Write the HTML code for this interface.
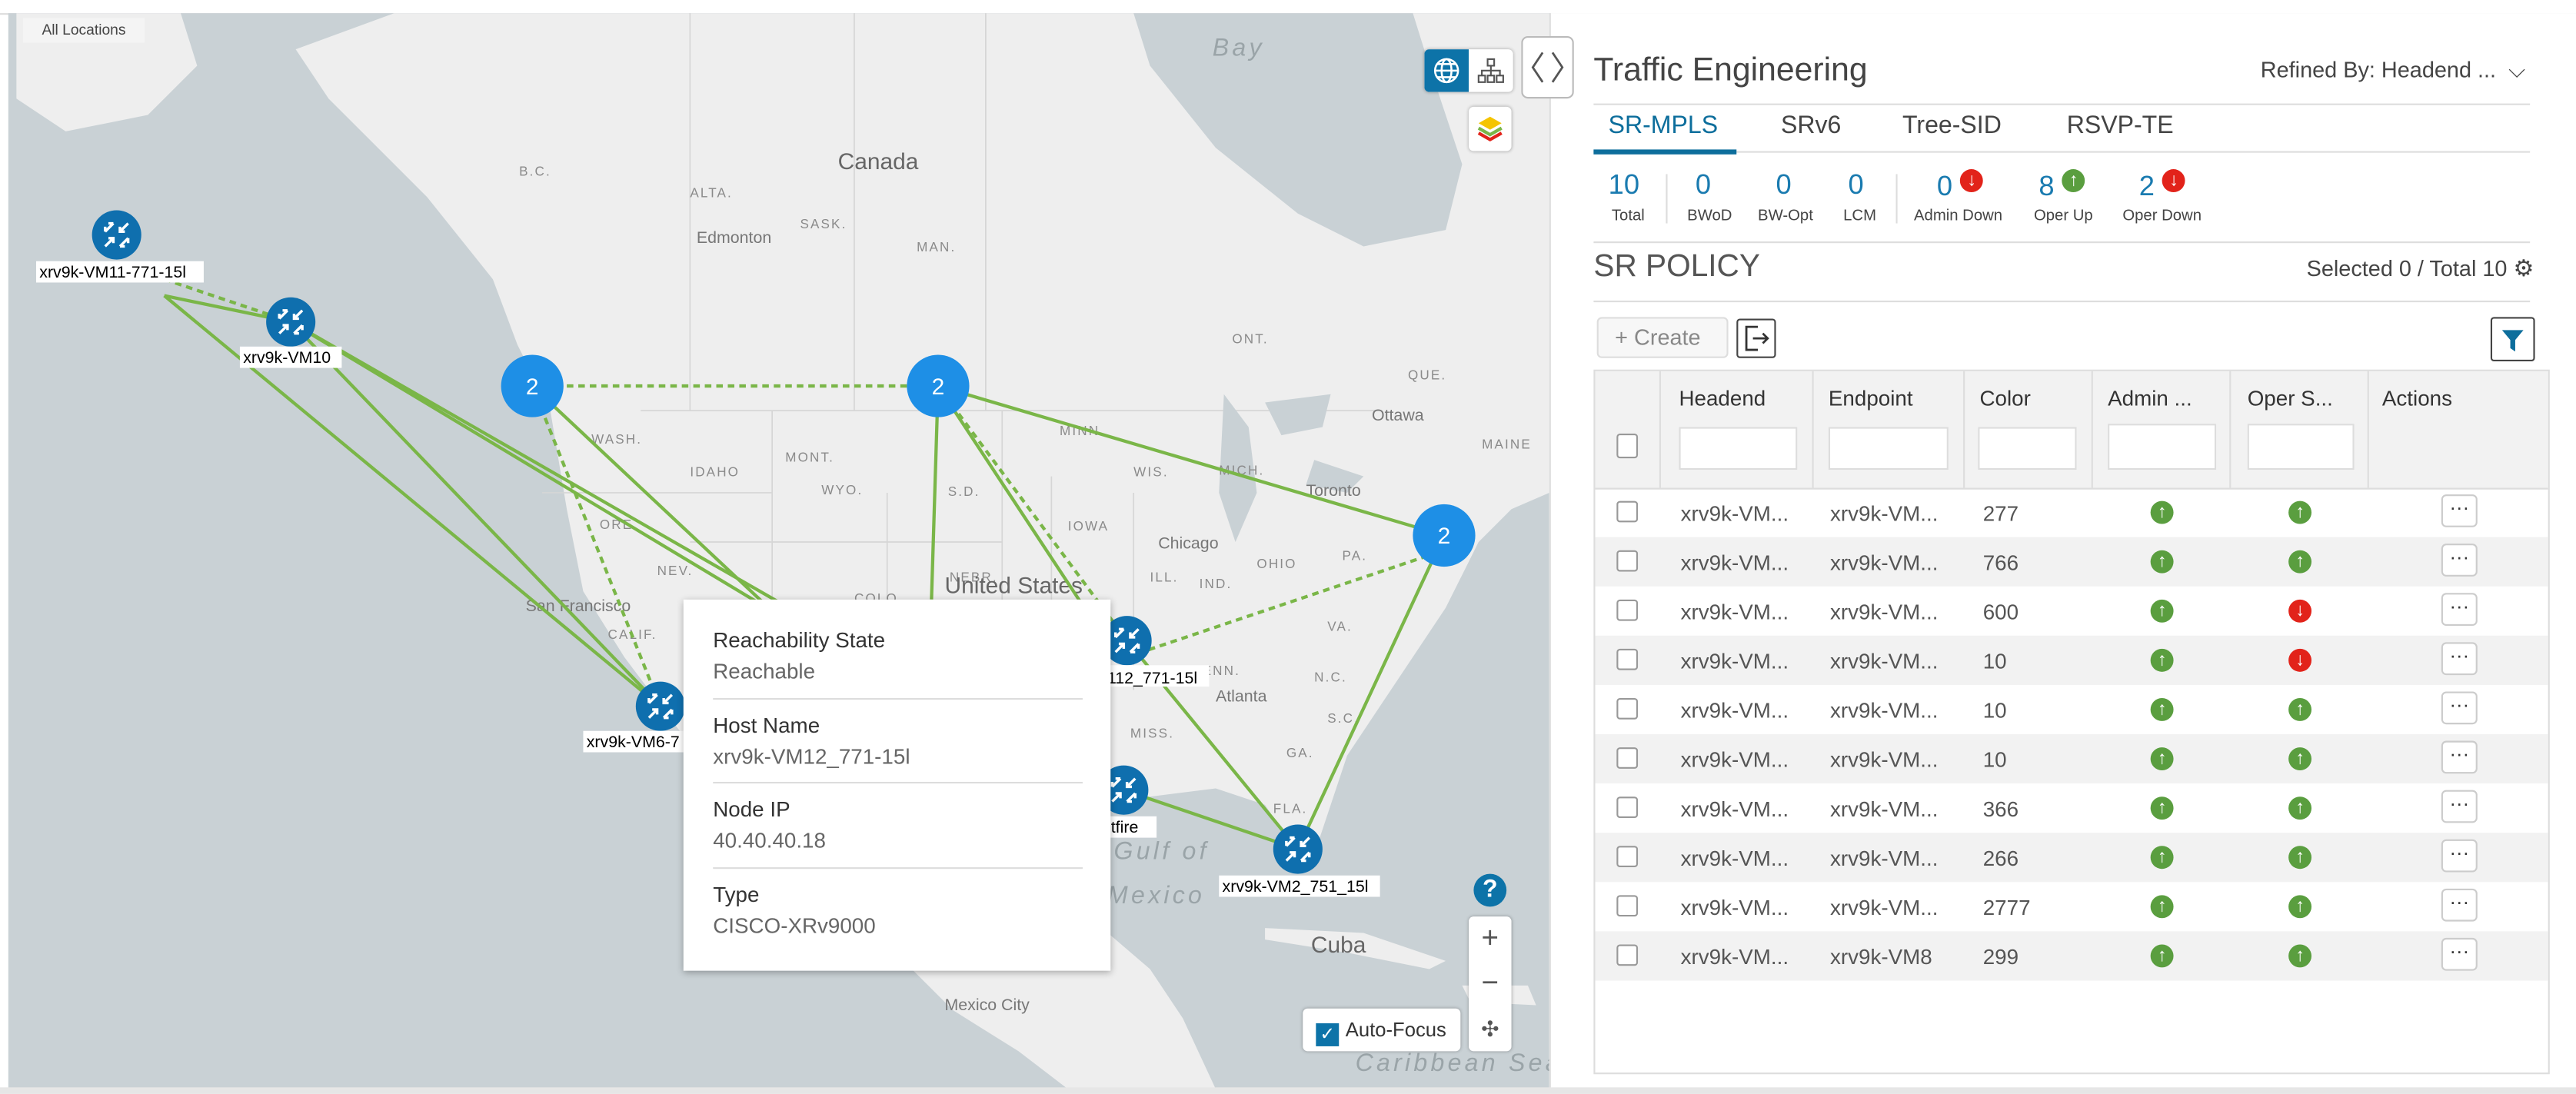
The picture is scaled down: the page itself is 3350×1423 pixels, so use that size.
<!DOCTYPE html>
<html><head><meta charset="utf-8"><style>
html,body{margin:0;padding:0;width:3350px;height:1422px;overflow:hidden;background:#e8e8e8}
#w{position:absolute;left:0;top:0;width:1568px;height:666px;transform:scale(2.13648);transform-origin:0 0;font-family:"Liberation Sans",sans-serif;background:#fff}
.a{position:absolute}
.cb{width:13px;height:13px;border:1px solid #999;border-radius:2px;background:#fff;box-sizing:border-box}
.up,.dn{display:inline-block;width:14px;height:14px;border-radius:50%;position:relative;vertical-align:middle}
.up{background:#5a9e3f}.dn{background:#e2231a}
.up:after,.dn:after{position:absolute;left:0;right:0;top:0;line-height:14px;text-align:center;color:#fff;font-size:11px;font-weight:bold}
.up:after{content:"↑"}.dn:after{content:"↓"}
.dots{width:22px;height:20px;border:1px solid #ccc;border-radius:3px;background:#fff;text-align:center;line-height:14px;font-size:12px;color:#333;box-sizing:border-box}
.row{position:absolute;left:971px;width:580px;height:30px;font-size:13px;color:#555}
.row span{position:absolute;top:8px}
</style></head><body><div id="w">
<div class="a" style="left:0;top:0;width:1568px;height:8px;background:#fff;border-bottom:1px solid #ddd"></div>
<svg class="a" style="left:5px;top:8px" width="938" height="655" viewBox="5 8 938 655">
<rect x="5" y="8" width="938" height="655" fill="#c9d1d5"/>
<path fill="#eeeeee" d="M240,8 L690,8 L700,40 L740,90 L790,130 L830,150 L880,140 L890,100 L870,40 L860,8 L943,8 L943,300 L920,310 L900,330 L880,370 L860,400 L840,430 L820,460 L810,490 L800,520 L790,520 L770,490 L740,480 L700,485 L670,495 L660,530 L665,560 L700,590 L720,620 L740,663 L650,663 L620,640 L580,615 L555,590 L520,560 L480,520 L440,480 L410,440 L380,400 L355,360 L345,310 L335,250 L315,210 L300,170 L260,120 L230,90 L200,60 L180,30 Z"/>
<path fill="#eeeeee" d="M10,8 L110,8 L120,40 L90,70 L40,80 L10,60 Z"/>
<path fill="#eeeeee" d="M770,565 L830,568 L880,585 L870,590 L820,580 L770,572 Z"/>
<path fill="#eeeeee" d="M890,600 L930,600 L935,612 L895,610 Z"/>
<path fill="none" stroke="#d6d6d6" stroke-width="0.8" d="M390,250 L840,250 M470,250 L470,400 M540,300 L540,400 M610,250 L610,400 M640,290 L640,390 M690,300 L690,420 M420,330 L610,330 M480,380 L690,380 M330,300 L470,300 M600,8 L600,250 M520,8 L520,250 M420,8 L420,250"/>
<path fill="#c9d1d5" d="M745,240 L760,260 L765,300 L752,330 L742,300 Z M770,245 L810,240 L805,260 L780,265 Z M800,280 L830,290 L820,300 L795,295 Z"/>
<g font-family="Liberation Sans,sans-serif" fill="#8a8a8a" font-size="8" letter-spacing="1">
<text x="316" y="107">B.C.</text><text x="420" y="120">ALTA.</text><text x="487" y="139">SASK.</text><text x="558" y="153">MAN.</text>
<text x="750" y="209">ONT.</text><text x="857" y="231">QUE.</text><text x="360" y="270">WASH.</text><text x="478" y="281">MONT.</text>
<text x="420" y="290">IDAHO</text><text x="500" y="301">WYO.</text><text x="365" y="322">ORE.</text><text x="400" y="350">NEV.</text>
<text x="578" y="354">NEBR.</text><text x="650" y="323">IOWA</text><text x="645" y="265">MINN.</text><text x="690" y="290">WIS.</text>
<text x="742" y="289">MICH.</text><text x="700" y="354">ILL.</text><text x="730" y="358">IND.</text><text x="765" y="346">OHIO</text>
<text x="817" y="341">PA.</text><text x="783" y="461">GA.</text><text x="808" y="440">S.C.</text><text x="800" y="415">N.C.</text>
<text x="726" y="411">TENN.</text><text x="688" y="449">MISS.</text><text x="902" y="273">MAINE</text><text x="808" y="384">VA.</text>
<text x="370" y="389">CALIF.</text><text x="520" y="367">COLO.</text><text x="577" y="302">S.D.</text><text x="775" y="495">FLA.</text>
</g>
<g font-family="Liberation Sans,sans-serif" fill="#777" font-size="10">
<text x="424" y="148">Edmonton</text><text x="705" y="334">Chicago</text><text x="835" y="256">Ottawa</text><text x="795" y="302">Toronto</text>
<text x="740" y="427">Atlanta</text><text x="320" y="372">San Francisco</text><text x="575" y="615">Mexico City</text>
</g>
<g font-family="Liberation Sans,sans-serif" fill="#666" font-size="14"><text x="510" y="103">Canada</text><text x="575" y="361">United States</text><text x="798" y="580">Cuba</text></g>
<g font-family="Liberation Sans,sans-serif" fill="#9aa4a8" font-size="15" font-style="italic" letter-spacing="2"><text x="738" y="34">Bay</text><text x="678" y="523">Gulf of</text><text x="674" y="550">Mexico</text><text x="825" y="652">Caribbean Sea</text></g>
<g stroke="#7ab648" stroke-width="2" fill="none">
<path d="M100,180 L402,430 M100,180 L177,196"/>
<path d="M177,196 L402,430 M177,196 L480,370 M177,196 L470,372"/>
<path d="M324,235 L470,372 M571,235 L567,365 M571,235 L879,326 M879,326 L790,517 M684,481 L790,517 M686,390 L790,517 M571,235 L660,370"/>
<g stroke-dasharray="4,3"><path d="M324,235 L571,235 M324,235 L402,430 M686,400 L879,335 M571,235 L686,390 M100,170 L177,196"/></g>
</g>
<g fill="#1e8fe6"><circle cx="324" cy="235" r="19"/><circle cx="571" cy="235" r="19"/><circle cx="879" cy="326" r="19"/></g>
<g fill="#fff" font-family="Liberation Sans,sans-serif" font-size="14" text-anchor="middle"><text x="324" y="240">2</text><text x="571" y="240">2</text><text x="879" y="331">2</text></g>
<g fill="#0f6fae"><circle cx="71" cy="143" r="15"/><circle cx="177" cy="196" r="15"/><circle cx="402" cy="430" r="15"/><circle cx="686" cy="390" r="15"/><circle cx="684" cy="481" r="15"/><circle cx="790" cy="517" r="15"/></g>
<defs><path id="ri" d="M-7,7 L-2,2 M-5,2 L-2,2 L-2,5 M7,-7 L2,-2 M5,-2 L2,-2 L2,-5 M-2,-7 L-7,-2 M-7,-5 L-7,-2 M-2,-7 L-5,-7 M2,7 L7,2 M7,5 L7,2 M2,7 L5,7"/></defs>
<g stroke="#fff" stroke-width="1.6" fill="none">
<use href="#ri" x="71" y="143"/><use href="#ri" x="177" y="196"/><use href="#ri" x="402" y="430"/><use href="#ri" x="686" y="390"/><use href="#ri" x="684" y="481"/><use href="#ri" x="790" y="517"/>
</g>
<g font-family="Liberation Sans,sans-serif" font-size="10" fill="#000">
<rect x="22" y="159" width="102" height="13" fill="#fff"/><text x="24" y="169">xrv9k-VM11-771-15l</text>
<rect x="146" y="211" width="62" height="13" fill="#fff"/><text x="148" y="221">xrv9k-VM10</text>
<rect x="355" y="445" width="62" height="13" fill="#fff"/><text x="357" y="455">xrv9k-VM6-7</text>
<rect x="672" y="405" width="64" height="13" fill="#fff"/><text x="674" y="416">112_771-15l</text>
<rect x="672" y="497" width="32" height="13" fill="#fff"/><text x="674" y="507">itfire</text>
<rect x="742" y="533" width="98" height="13" fill="#fff"/><text x="744" y="543">xrv9k-VM2_751_15l</text>
</g>
</svg>
<div class="a" style="left:14px;top:11px;width:74px;height:15px;background:#f4f4f4;font-size:9px;color:#444;line-height:15px;text-align:center">All Locations</div>
<div class="a" style="left:416px;top:365px;width:260px;height:226px;background:#fff;box-shadow:0 1px 4px rgba(0,0,0,.3);font-size:13px">
<div class="a" style="left:18px;top:17px;color:#333">Reachability State</div><div class="a" style="left:18px;top:36px;color:#666">Reachable</div>
<div class="a" style="left:18px;top:60px;width:225px;border-top:1px solid #ddd"></div>
<div class="a" style="left:18px;top:69px;color:#333">Host Name</div><div class="a" style="left:18px;top:88px;color:#666">xrv9k-VM12_771-15l</div>
<div class="a" style="left:18px;top:111px;width:225px;border-top:1px solid #ddd"></div>
<div class="a" style="left:18px;top:120px;color:#333">Node IP</div><div class="a" style="left:18px;top:139px;color:#666">40.40.40.18</div>
<div class="a" style="left:18px;top:163px;width:225px;border-top:1px solid #ddd"></div>
<div class="a" style="left:18px;top:172px;color:#333">Type</div><div class="a" style="left:18px;top:191px;color:#666">CISCO-XRv9000</div>
</div>
<div class="a" style="left:867px;top:30px;width:54px;height:26px;border-radius:3px;background:#fff;overflow:hidden;box-shadow:0 0 2px rgba(0,0,0,.3)"><div style="width:27px;height:26px;background:#0d73a8"><svg width="27" height="26"><g stroke="#fff" stroke-width="1.2" fill="none"><circle cx="13.5" cy="13" r="7"/><ellipse cx="13.5" cy="13" rx="3" ry="7"/><path d="M6.5,13 H20.5 M8,9 H19 M8,17 H19"/></g></svg></div><div class="a" style="left:27px;top:0"><svg width="27" height="26"><g stroke="#555" stroke-width="1" fill="none"><rect x="11.5" y="6" width="4" height="4"/><rect x="6" y="16" width="4" height="4"/><rect x="11.5" y="16" width="4" height="4"/><rect x="17" y="16" width="4" height="4"/><path d="M13.5,10 V13 M8,16 V13 H19 V16 M13.5,13 V16"/></g></svg></div></div>
<div class="a" style="left:894px;top:65px;width:26px;height:27px;background:#fff;border-radius:3px;box-shadow:0 0 2px rgba(0,0,0,.3)"><svg width="26" height="27"><path d="M13,6 L20,10 L13,14 L6,10Z" fill="#f5c400"/><path d="M6,13 L13,17 L20,13" stroke="#7ab648" stroke-width="2" fill="none"/><path d="M6,16 L13,20 L20,16" stroke="#e2231a" stroke-width="2" fill="none"/></svg></div>
<div class="a" style="left:897px;top:532px;width:20px;height:20px;border-radius:50%;background:#0d73a8;color:#fff;text-align:center;font-weight:bold;font-size:15px;line-height:20px">?</div>
<div class="a" style="left:894px;top:558px;width:26px;height:82px;background:#fff;border-radius:3px;box-shadow:0 0 2px rgba(0,0,0,.3);color:#555;text-align:center;font-size:18px;line-height:27px">+<br>−<br><span style="font-size:13px">✣</span></div>
<div class="a" style="left:793px;top:614px;width:96px;height:26px;background:#fff;border-radius:3px;box-shadow:0 0 2px rgba(0,0,0,.3);font-size:12px;color:#333;line-height:26px"><span style="display:inline-block;width:14px;height:14px;background:#0d73a8;color:#fff;font-size:11px;line-height:14px;text-align:center;margin:0 4px 0 8px;vertical-align:-2px">✓</span>Auto-Focus</div>
<div class="a" style="left:943px;top:8px;width:625px;height:655px;background:#fff;border-left:1px solid #ddd"></div>
<div class="a" style="left:926px;top:22px;width:32px;height:38px;background:#fff;border:1px solid #bbb;border-radius:4px;box-sizing:border-box"><svg width="30" height="36"><path d="M12,9 L6,18 L12,27 M18,9 L24,18 L18,27" stroke="#555" stroke-width="1.3" fill="none"/></svg></div>
<div class="a" style="left:970px;top:32px;font-size:20px;color:#444">Traffic Engineering</div>
<div class="a" style="left:1376px;top:35px;font-size:13.5px;color:#444">Refined By: Headend ... &nbsp;⌵</div>
<div class="a" style="left:970px;top:63px;width:570px;border-top:1px solid #ddd"></div>
<div class="a" style="left:979px;top:68px;font-size:15px;color:#0d6e9c">SR-MPLS</div>
<div class="a" style="left:1084px;top:68px;font-size:15px;color:#444">SRv6</div>
<div class="a" style="left:1158px;top:68px;font-size:15px;color:#444">Tree-SID</div>
<div class="a" style="left:1258px;top:68px;font-size:15px;color:#444">RSVP-TE</div>
<div class="a" style="left:970px;top:92px;width:570px;border-top:1px solid #ddd"></div>
<div class="a" style="left:970px;top:91px;width:87px;height:3px;background:#0d6e9c"></div>
<div class="a" style="left:979px;top:103px;font-size:17px;color:#1a7bb0">10</div><div class="a" style="left:981px;top:126px;font-size:9.5px;color:#444">Total</div>
<div class="a" style="left:1014px;top:106px;height:30px;border-left:1px solid #ddd"></div>
<div class="a" style="left:1032px;top:103px;font-size:17px;color:#1a7bb0">0</div><div class="a" style="left:1027px;top:126px;font-size:9.5px;color:#444">BWoD</div>
<div class="a" style="left:1081px;top:103px;font-size:17px;color:#1a7bb0">0</div><div class="a" style="left:1070px;top:126px;font-size:9.5px;color:#444">BW-Opt</div>
<div class="a" style="left:1125px;top:103px;font-size:17px;color:#1a7bb0">0</div><div class="a" style="left:1122px;top:126px;font-size:9.5px;color:#444">LCM</div>
<div class="a" style="left:1154px;top:106px;height:30px;border-left:1px solid #ddd"></div>
<div class="a" style="left:1179px;top:103px;font-size:17px;color:#1a7bb0">0 <span class="dn" style="vertical-align:2px"></span></div><div class="a" style="left:1165px;top:126px;font-size:9.5px;color:#444">Admin Down</div>
<div class="a" style="left:1241px;top:103px;font-size:17px;color:#1a7bb0">8 <span class="up" style="vertical-align:2px"></span></div><div class="a" style="left:1238px;top:126px;font-size:9.5px;color:#444">Oper Up</div>
<div class="a" style="left:1302px;top:103px;font-size:17px;color:#1a7bb0">2 <span class="dn" style="vertical-align:2px"></span></div><div class="a" style="left:1292px;top:126px;font-size:9.5px;color:#444">Oper Down</div>
<div class="a" style="left:970px;top:147px;width:570px;border-top:1px solid #ddd"></div>
<div class="a" style="left:970px;top:152px;font-size:19px;color:#555">SR POLICY</div>
<div class="a" style="left:1404px;top:155px;font-size:13.5px;color:#444">Selected 0 / Total 10 <span style="font-size:14px">⚙</span></div>
<div class="a" style="left:970px;top:183px;width:570px;border-top:1px solid #ddd"></div>
<div class="a" style="left:972px;top:193px;width:80px;height:25px;border:1px solid #ddd;border-radius:3px;background:#f7f7f7;color:#888;font-size:13.5px;line-height:24px;box-sizing:border-box;padding-left:10px">+ Create</div>
<div class="a" style="left:1057px;top:194px;width:24px;height:24px;border:1px solid #444;border-radius:2px;box-sizing:border-box"><svg width="22" height="22"><path d="M12,4 H5 V18 H12 M9,11 H18 M15,8 L18,11 L15,14" stroke="#333" stroke-width="1.3" fill="none"/></svg></div>
<div class="a" style="left:1516px;top:193px;width:27px;height:27px;border:1px solid #444;border-radius:2px;box-sizing:border-box"><svg width="25" height="25"><path d="M6,7 L19,7 L14,13 L14,20 L11,18 L11,13Z" fill="#0d6e9c"/></svg></div>
<div class="a" style="left:970px;top:225px;width:582px;height:429px;border:1px solid #ddd;box-sizing:border-box"></div>
<div class="a" style="left:971px;top:226px;width:580px;height:71px;background:#f2f2f2;border-bottom:1px solid #ddd"></div>
<div class="a" style="left:1010px;top:226px;height:71px;border-left:1px solid #ddd"></div>
<div class="a" style="left:1103px;top:226px;height:71px;border-left:1px solid #ddd"></div>
<div class="a" style="left:1195px;top:226px;height:71px;border-left:1px solid #ddd"></div>
<div class="a" style="left:1273px;top:226px;height:71px;border-left:1px solid #ddd"></div>
<div class="a" style="left:1357px;top:226px;height:71px;border-left:1px solid #ddd"></div>
<div class="a" style="left:1441px;top:226px;height:71px;border-left:1px solid #ddd"></div>
<div class="a" style="font-size:13px;color:#333;top:235px;left:1022px">Headend</div>
<div class="a" style="font-size:13px;color:#333;top:235px;left:1113px">Endpoint</div>
<div class="a" style="font-size:13px;color:#333;top:235px;left:1205px">Color</div>
<div class="a" style="font-size:13px;color:#333;top:235px;left:1283px">Admin ...</div>
<div class="a" style="font-size:13px;color:#333;top:235px;left:1368px">Oper S...</div>
<div class="a" style="font-size:13px;color:#333;top:235px;left:1450px">Actions</div>
<div class="a" style="left:1022px;top:260px;width:70px;height:24px;background:#fff;border:1px solid #ddd"></div>
<div class="a" style="left:1113px;top:260px;width:71px;height:24px;background:#fff;border:1px solid #ddd"></div>
<div class="a" style="left:1204px;top:260px;width:58px;height:24px;background:#fff;border:1px solid #ddd"></div>
<div class="a" style="left:1283px;top:258px;width:64px;height:26px;background:#fff;border:1px solid #ddd"></div>
<div class="a" style="left:1368px;top:258px;width:63px;height:26px;background:#fff;border:1px solid #ddd"></div>
<div class="a cb" style="left:984px;top:264px;width:13px;height:15px"></div>
<div class="row" style="top:297px"><span class="cb" style="left:13px"></span><span style="left:52px">xrv9k-VM...</span><span style="left:143px">xrv9k-VM...</span><span style="left:236px">277</span><span class="up" style="left:338px"></span><span class="up" style="left:422px"></span><span class="dots" style="left:515px;top:4px">···</span></div>
<div class="row" style="top:327px;background:#f2f2f2"><span class="cb" style="left:13px"></span><span style="left:52px">xrv9k-VM...</span><span style="left:143px">xrv9k-VM...</span><span style="left:236px">766</span><span class="up" style="left:338px"></span><span class="up" style="left:422px"></span><span class="dots" style="left:515px;top:4px">···</span></div>
<div class="row" style="top:357px"><span class="cb" style="left:13px"></span><span style="left:52px">xrv9k-VM...</span><span style="left:143px">xrv9k-VM...</span><span style="left:236px">600</span><span class="up" style="left:338px"></span><span class="dn" style="left:422px"></span><span class="dots" style="left:515px;top:4px">···</span></div>
<div class="row" style="top:387px;background:#f2f2f2"><span class="cb" style="left:13px"></span><span style="left:52px">xrv9k-VM...</span><span style="left:143px">xrv9k-VM...</span><span style="left:236px">10</span><span class="up" style="left:338px"></span><span class="dn" style="left:422px"></span><span class="dots" style="left:515px;top:4px">···</span></div>
<div class="row" style="top:417px"><span class="cb" style="left:13px"></span><span style="left:52px">xrv9k-VM...</span><span style="left:143px">xrv9k-VM...</span><span style="left:236px">10</span><span class="up" style="left:338px"></span><span class="up" style="left:422px"></span><span class="dots" style="left:515px;top:4px">···</span></div>
<div class="row" style="top:447px;background:#f2f2f2"><span class="cb" style="left:13px"></span><span style="left:52px">xrv9k-VM...</span><span style="left:143px">xrv9k-VM...</span><span style="left:236px">10</span><span class="up" style="left:338px"></span><span class="up" style="left:422px"></span><span class="dots" style="left:515px;top:4px">···</span></div>
<div class="row" style="top:477px"><span class="cb" style="left:13px"></span><span style="left:52px">xrv9k-VM...</span><span style="left:143px">xrv9k-VM...</span><span style="left:236px">366</span><span class="up" style="left:338px"></span><span class="up" style="left:422px"></span><span class="dots" style="left:515px;top:4px">···</span></div>
<div class="row" style="top:507px;background:#f2f2f2"><span class="cb" style="left:13px"></span><span style="left:52px">xrv9k-VM...</span><span style="left:143px">xrv9k-VM...</span><span style="left:236px">266</span><span class="up" style="left:338px"></span><span class="up" style="left:422px"></span><span class="dots" style="left:515px;top:4px">···</span></div>
<div class="row" style="top:537px"><span class="cb" style="left:13px"></span><span style="left:52px">xrv9k-VM...</span><span style="left:143px">xrv9k-VM...</span><span style="left:236px">2777</span><span class="up" style="left:338px"></span><span class="up" style="left:422px"></span><span class="dots" style="left:515px;top:4px">···</span></div>
<div class="row" style="top:567px;background:#f2f2f2"><span class="cb" style="left:13px"></span><span style="left:52px">xrv9k-VM...</span><span style="left:143px">xrv9k-VM8</span><span style="left:236px">299</span><span class="up" style="left:338px"></span><span class="up" style="left:422px"></span><span class="dots" style="left:515px;top:4px">···</span></div>
<div class="a" style="left:0;top:662px;width:1568px;height:4px;background:#e6e6e6"></div>
</div></body></html>
